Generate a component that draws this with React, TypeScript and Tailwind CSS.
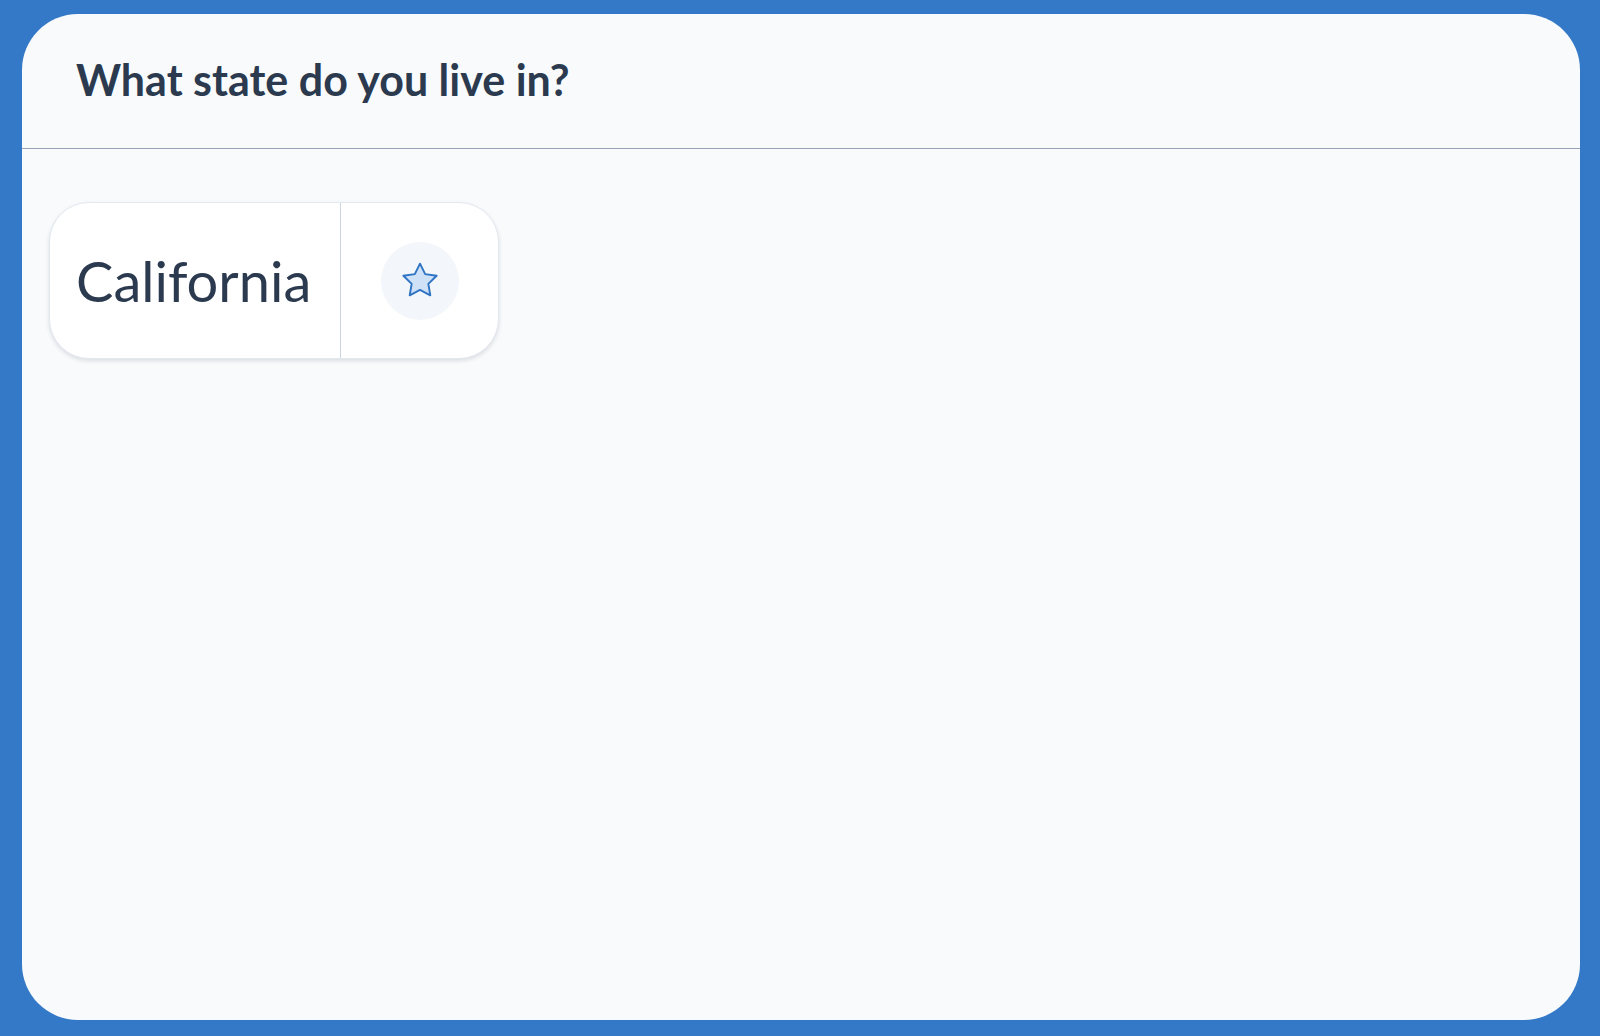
import React, { useState } from 'react';

function StarIcon() {
  return (
    <svg viewBox="0 0 24 24" className="h-[54px] w-[54px]" fill="#cfe1f6" stroke="#2f74c4" strokeWidth="0.85" strokeLinejoin="round">
      <path d="M12 4.3l2.3 4.65 5.1.72-3.7 3.6.88 5.08L12 15.95l-4.58 2.4.88-5.08-3.7-3.6 5.1-.72z" />
    </svg>
  );
}

export default function App() {
  const [starred, setStarred] = useState(false);

  return (
    <div className="flex h-[1036px] w-full bg-[#3479c7] pb-4 pl-[22px] pr-5 pt-[14px] font-['Lato',sans-serif]">
      <div className="flex flex-1 flex-col overflow-hidden rounded-[56px] bg-[#f8fafc]">
        <header className="flex h-[135px] shrink-0 items-center border-b border-[#94a3b8] px-[54px]">
          <h1 className="-mt-1 text-[43px] font-bold leading-none text-[#2c3a4f]">What state do you live in?</h1>
        </header>

        <div className="flex items-start px-[27px] pt-[53px]">
          <div className="flex h-[157px] overflow-hidden rounded-[40px] border border-[#e2e8f0] bg-white shadow-[0_2px_4px_rgba(15,23,42,0.12)]">
            <div className="flex w-[291px] items-center border-r border-[#cbd5e1] pl-[26px]">
              <span className="text-[56px] leading-none text-[#2c3a4f]">California</span>
            </div>
            <div className="flex w-[157px] items-center justify-center">
              <button
                onClick={() => setStarred(!starred)}
                className="flex h-[78px] w-[78px] items-center justify-center rounded-full bg-[#f3f6fa]"
              >
                <StarIcon />
              </button>
            </div>
          </div>
        </div>
      </div>
    </div>
  );
}
